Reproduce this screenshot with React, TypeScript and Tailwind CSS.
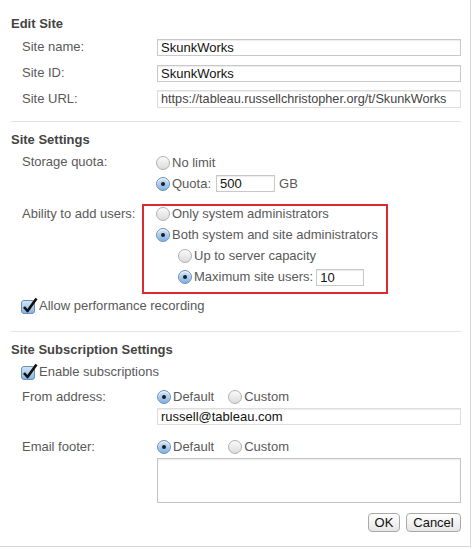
import React from "react";

const Radio = ({ checked }: { checked?: boolean }) =>
  checked ? (
    <span className="flex h-[14px] w-[14px] shrink-0 items-center justify-center rounded-full border border-[#6d8fb5] bg-gradient-to-b from-[#d4e6f8] to-[#7fb2e4] shadow-[inset_0_1px_1px_rgba(255,255,255,0.8)]">
      <span className="h-[4px] w-[4px] rounded-full bg-[#1c1c1c]" />
    </span>
  ) : (
    <span className="h-[14px] w-[14px] shrink-0 rounded-full border border-[#b0b0b0] bg-gradient-to-b from-[#fafafa] to-[#dcdcdc]" />
  );

const Check = () => (
  <svg width="17" height="17" viewBox="0 0 17 17" className="shrink-0">
    <defs>
      <linearGradient id="cb" x1="0" y1="0" x2="0" y2="1">
        <stop offset="0" stopColor="#d4e6f8" />
        <stop offset="1" stopColor="#82b3e3" />
      </linearGradient>
    </defs>
    <rect x="0.5" y="3.5" width="13" height="13" rx="2.5" fill="url(#cb)" stroke="#6d8fb5" />
    <path d="M3 10 L6.5 14 L15.5 1.5" fill="none" stroke="#111" strokeWidth="2.6" strokeLinejoin="round" />
  </svg>
);

const Input = ({ value, className = "", muted }: { value?: string; className?: string; muted?: boolean }) => (
  <div
    className={`flex h-[17px] items-center border px-[3px] leading-none shadow-[inset_0_1px_1px_rgba(0,0,0,0.08)] ${
      muted ? "border-[#dedede] text-[#444]" : "border-[#c9c9c9] text-[#111]"
    } ${className}`}
  >
    {value}
  </div>
);

const Heading = ({ children, className = "" }: { children: React.ReactNode; className?: string }) => (
  <div className={`h-[16px] font-bold leading-[16px] text-[#444] ${className}`}>{children}</div>
);

const Row = ({ label, children }: { label: string; children: React.ReactNode }) => (
  <div className="ml-[11px] flex h-[26px] items-center">
    <div className="w-[135px] shrink-0">{label}</div>
    {children}
  </div>
);

const Option = ({ checked, children, className = "" }: { checked?: boolean; children: React.ReactNode; className?: string }) => (
  <div className={`flex h-[16px] items-center gap-[2px] ${className}`}>
    <Radio checked={checked} />
    {children}
  </div>
);

export default function App() {
  return (
    <div
      className="flex h-[547px] w-[471px] flex-col border-r border-b border-[#d6d6d6] bg-white pr-[9px] pl-[11px] pt-[16px] text-[13px] leading-[16px] text-[#595959]"
      style={{ fontFamily: '"Liberation Sans", Arial, sans-serif' }}
    >
      <Heading>Edit Site</Heading>
      <div className="mt-[2px]">
        <Row label="Site name:">
          <Input value="SkunkWorks" className="flex-1" />
        </Row>
        <Row label="Site ID:">
          <Input value="SkunkWorks" className="flex-1" />
        </Row>
        <Row label="Site URL:">
          <Input
            value="https://tableau.russellchristopher.org/t/SkunkWorks"
            className="h-[18px] flex-1 text-[12.7px]"
            muted
          />
        </Row>
      </div>

      <div className="mt-[9px] h-px bg-[#e2e2e2]" />

      <Heading className="mt-[10px]">Site Settings</Heading>

      <div className="mt-[4px] ml-[11px] flex">
        <div className="w-[134px] shrink-0 pt-[2px]">Storage quota:</div>
        <div className="flex flex-col">
          <div className="flex h-[21px] items-center">
            <Option>No limit</Option>
          </div>
          <div className="flex h-[21px] items-center">
            <Option checked>Quota:</Option>
            <Input value="500" className="ml-[5px] w-[59px]" />
            <span className="ml-[4px]">GB</span>
          </div>
        </div>
      </div>

      <div className="mt-[10px] ml-[11px] flex items-start">
        <div className="mt-[2px] w-[120px] shrink-0">Ability to add users:</div>
        <div className="flex w-[246px] flex-col gap-[5px] border-2 border-[#dc2a34] pb-[7px] pl-[12px]">
          <Option>Only system administrators</Option>
          <Option checked>Both system and site administrators</Option>
          <Option className="pl-[22px]">Up to server capacity</Option>
          <div className="flex h-[16px] items-center pl-[22px]">
            <Option checked>Maximum site users:</Option>
            <Input value="10" className="ml-[3px] w-[48px]" />
          </div>
        </div>
      </div>

      <div className="mt-[3px] ml-[10px] flex h-[17px] items-end gap-[1px]">
        <Check />
        <span>Allow performance recording</span>
      </div>

      <div className="mt-[17px] h-px bg-[#e2e2e2]" />

      <Heading className="mt-[10px]">Site Subscription Settings</Heading>

      <div className="mt-[5px] ml-[10px] flex h-[17px] items-end gap-[1px]">
        <Check />
        <span>Enable subscriptions</span>
      </div>

      <div className="mt-[9px] ml-[11px] flex h-[16px] items-center">
        <div className="w-[135px] shrink-0">From address:</div>
        <Option checked>Default</Option>
        <Option className="ml-[14px]">Custom</Option>
      </div>
      <Input value="russell@tableau.com" className="mt-[3px] ml-[146px] border-[#dedede]" />

      <div className="mt-[14px] ml-[11px] flex h-[16px] items-center">
        <div className="w-[135px] shrink-0">Email footer:</div>
        <Option checked>Default</Option>
        <Option className="ml-[14px]">Custom</Option>
      </div>
      <div className="mt-[3px] ml-[146px] h-[45px] border border-[#c4c4c4] shadow-[inset_0_1px_2px_rgba(0,0,0,0.08)]" />

      <div className="mt-[10px] flex justify-end gap-[6px]">
        <button className="h-[19px] w-[32px] rounded-[4px] border border-[#a9a9a9] bg-gradient-to-b from-white to-[#e6e6e6] text-[13px] leading-none text-[#111]">
          OK
        </button>
        <button className="h-[19px] w-[55px] rounded-[4px] border border-[#a9a9a9] bg-gradient-to-b from-white to-[#e6e6e6] text-[13px] leading-none text-[#111]">
          Cancel
        </button>
      </div>
    </div>
  );
}
